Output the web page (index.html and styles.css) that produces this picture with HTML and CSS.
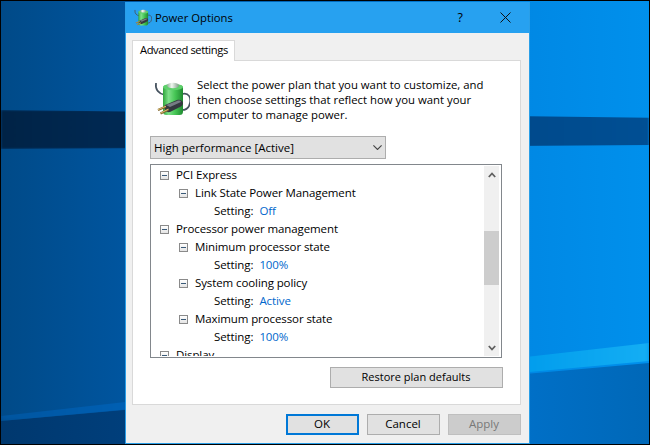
FILE: index.html
```html
<!DOCTYPE html>
<html lang="en">
<head>
<meta charset="utf-8">
<title>Power Options</title>
<link rel="stylesheet" href="styles.css">
</head>
<body>
<div class="desktop">
  <div class="wall-band"></div>
  <div class="wall-floor"></div>
  <div class="wall-glow"></div>
  <div class="window">
    <header class="titlebar">
      <svg class="title-icon" viewBox="9 11 37 37" aria-hidden="true">
        <defs>
          <linearGradient id="cell" x1="0" x2="1" y1="0" y2="0">
            <stop offset="0" stop-color="#2fa63c"/>
            <stop offset=".28" stop-color="#7fe08a"/>
            <stop offset=".6" stop-color="#46c655"/>
            <stop offset="1" stop-color="#1f8a30"/>
          </linearGradient>
          <linearGradient id="cap" x1="0" x2="1" y1="0" y2="0">
            <stop offset="0" stop-color="#93ad98"/>
            <stop offset=".4" stop-color="#f2f8f2"/>
            <stop offset="1" stop-color="#7f9a86"/>
          </linearGradient>
          <g id="power-icon">
            <path d="M11 13C10 20 14 24 20 25" fill="none" stroke="#46535f" stroke-width="1.700"/>
            <path d="M37 24C44 22 46 28 45 33 44 38 41 40 37 40" fill="none" stroke="#46535f" stroke-width="1.700"/>
            <rect x="18" y="15" width="20" height="30" rx="3.500" fill="url(#cell)"/>
            <ellipse cx="28" cy="17" rx="10" ry="3.200" fill="#5fd16c"/>
            <ellipse cx="28" cy="15.500" rx="6" ry="2.800" fill="url(#cap)"/>
            <path d="M20 35L32 30C35 29 38 31 38 33 38 36 35 37 33 38L25 42C21 43 18 38 20 35z" fill="#34383f"/>
            <path d="M21 35L32 31C34 30 36 31 36 32L25 37z" fill="#767c84"/>
            <path d="M13 40L21 36.500M15.500 43.500L23.500 39.500" stroke="#7d6126" stroke-width="2.200"/>
            <path d="M13 39.700L21 36.200M15.500 43.200L23.500 39.200" stroke="#e6c87e" stroke-width=".9"/>
          </g>
        </defs>
        <use href="#power-icon"/>
      </svg>
      <span class="title-text">Power Options</span>
      <span class="help">?</span>
      <svg class="close" viewBox="0 0 11 11" aria-hidden="true"><path d="M.5.5l10 10M10.500.5l-10 10" stroke="#111" stroke-width="1" fill="none"/></svg>
    </header>
    <div class="body">
      <div class="tabs"><div class="tab">Advanced settings</div></div>
      <section class="panel">
        <div class="intro">
          <svg class="plan-icon" viewBox="5 8 40 40" aria-hidden="true"><use href="#power-icon"/></svg>
          <p class="intro-text">Select the power plan that you want to customize, and then choose settings that reflect how you want your computer to manage power.</p>
        </div>
        <div class="select">
          <span>High performance [Active]</span>
          <svg class="chev" viewBox="0 0 9 5" aria-hidden="true"><path d="M.4.4l4.100 4.100L8.600.4" fill="none" stroke="#444" stroke-width="1.100"/></svg>
        </div>
        <div class="treebox">
          <div class="tree">
            <div class="row"><i class="box"></i>PCI Express</div>
            <div class="row lvl1"><i class="box"></i>Link State Power Management</div>
            <div class="row lvl2">Setting:<a class="val">Off</a></div>
            <div class="row"><i class="box"></i>Processor power management</div>
            <div class="row lvl1"><i class="box"></i>Minimum processor state</div>
            <div class="row lvl2">Setting:<a class="val">100%</a></div>
            <div class="row lvl1"><i class="box"></i>System cooling policy</div>
            <div class="row lvl2">Setting:<a class="val">Active</a></div>
            <div class="row lvl1"><i class="box"></i>Maximum processor state</div>
            <div class="row lvl2">Setting:<a class="val">100%</a></div>
            <div class="row"><i class="box"></i>Display</div>
          </div>
          <div class="scrollbar">
            <svg class="arrow" viewBox="0 0 8 6" aria-hidden="true"><path d="M.8 5L4 1.500 7.200 5" fill="none" stroke="#606060" stroke-width="1.800"/></svg>
            <div class="track"><div class="thumb"></div></div>
            <svg class="arrow" viewBox="0 0 8 6" aria-hidden="true"><path d="M.8 1L4 4.500 7.200 1" fill="none" stroke="#606060" stroke-width="1.800"/></svg>
          </div>
        </div>
        <div class="restore-row"><button class="btn restore">Restore plan defaults</button></div>
      </section>
      <footer class="actions">
        <button class="btn ok">OK</button>
        <button class="btn">Cancel</button>
        <button class="btn disabled">Apply</button>
      </footer>
    </div>
  </div>
</div>
</body>
</html>
```

FILE: styles.css
```css
* { box-sizing: border-box; }
html, body { margin: 0; padding: 0; }
body { width: 650px; height: 445px; overflow: hidden; background: #000; font-family: "Open Sans", "Noto Sans", sans-serif; font-size: 11.5px; color: #000; }
.desktop { position: relative; width: 648px; height: 443px; margin: 1px; overflow: hidden;
  background: linear-gradient(90deg, #004a88 0%, #00559f 19%, #0070c8 60%, #0088e4 80%, #0090ec 100%); }
.wall-band { position: absolute; left: 0; right: 0; top: 109px; height: 39px; filter: blur(1px);
  background: linear-gradient(90deg, #002346 0%, #002a55 20%, #004a8c 80%, #004f94 100%);
  clip-path: polygon(0 0, 100% 20%, 100% 90%, 0 100%); }
.wall-floor { position: absolute; left: 0; right: 0; top: 340px; bottom: 0;
  background: linear-gradient(90deg, #00386e 0%, #003f7c 20%, #0070c8 80%, #0068b8 100%);
  clip-path: polygon(0 80px, 100% 22px, 100% 100%, 0 100%); }
.wall-glow { position: absolute; left: 0; right: 0; top: 330px; height: 90px; filter: blur(2px);
  background: linear-gradient(90deg, #00559f 0%, #0060b4 20%, #009cec 80%, #14aef4 100%);
  clip-path: polygon(0 85px, 100% 12px, 100% 30px, 0 90px); }
.window { position: absolute; left: 124px; top: 1px; width: 405px; height: 442px; display: flex; flex-direction: column; background: #f0f0f0; border: 1px solid #2a9fe8; border-top: 0; }
.titlebar { height: 31px; flex: none; display: flex; align-items: center; background: #27a1f0; padding-left: 8px; }
.title-icon { width: 18px; height: 18px; flex: none; }
.title-text { margin-left: 3px; font-size: 11.300px; flex: 1; }
.help { font-size: 12.500px; margin-right: 37px; }
.close { width: 11px; height: 11px; margin-right: 18px; flex: none; }
.body { flex: 1; display: flex; flex-direction: column; padding: 7px 8px 8px 6px; }
.tabs { display: flex; height: 21px; flex: none; position: relative; z-index: 1; margin-bottom: -1px; }
.tab { width: 103px; background: #fff; border: 1px solid #d9d9d9; border-bottom: 0; padding: 1px 0 0 7px; font-size: 11.200px; letter-spacing: -.4px; white-space: nowrap; }
.panel { height: 345px; width: 389px; flex: none; background: #fff; border: 1px solid #d9d9d9; padding: 14px 17px 0 17px; display: flex; flex-direction: column; }
.intro { display: flex; height: 61px; flex: none; }
.plan-icon { width: 40px; height: 40px; margin: 3px 0 0 0; flex: none; }
.intro-text { margin: 2px 0 0 7px; width: 296px; line-height: 15px; font-size: 11.350px; }
.select { height: 23px; flex: none; width: 236px; display: flex; align-items: center; justify-content: space-between; background: #e1e1e1; border: 1px solid #adadad; padding: 0 3px 0 3px; font-size: 11.500px; }
.chev { width: 9px; height: 5px; flex: none; }
.treebox { margin-top: 5px; height: 194px; flex: none; width: 352px; border: 1px solid #82878c; display: flex; overflow: hidden; padding: 1px 2px 1px 0; }
.tree { flex: 1; padding: 0 0 0 9px; overflow: hidden; letter-spacing: -.1px; }
.row { height: 18px; display: flex; align-items: center; white-space: nowrap; padding-bottom: 2px; }
.lvl1 { padding-left: 19px; }
.lvl2 { padding-left: 54px; }
.box { width: 9px; height: 9px; flex: none; margin: 2px 7px 0 0; border: 1px solid #8a8a8a; background: linear-gradient(#fff, #e4e4e4); position: relative; }
.box::after { content: ""; position: absolute; left: 1px; right: 1px; top: 3px; height: 1px; background: #3a5a78; }
.val { margin-left: 6px; color: #0066cc; }
.scrollbar { width: 15px; flex: none; background: #f0f0f0; display: flex; flex-direction: column; }
.arrow { width: 8px; height: 6px; flex: none; margin: 6px auto 5px; }
.track { flex: 1; }
.thumb { height: 54px; margin-top: 48px; background: #cdcdcd; }
.restore-row { display: flex; justify-content: flex-end; margin-top: 9px; }
.btn { font: inherit; color: #000; width: 73px; height: 21px; padding: 0 1px 2px 0; background: #e1e1e1; border: 1px solid #adadad; border-radius: 0; }
.restore { width: 173px; font-size: 11px; }
.actions { display: flex; justify-content: flex-end; gap: 8px; margin-top: 9px; }
.ok { border: 2px solid #0078d7; }
.disabled { background: #cccccc; border-color: #bfbfbf; color: #787878; }
```
